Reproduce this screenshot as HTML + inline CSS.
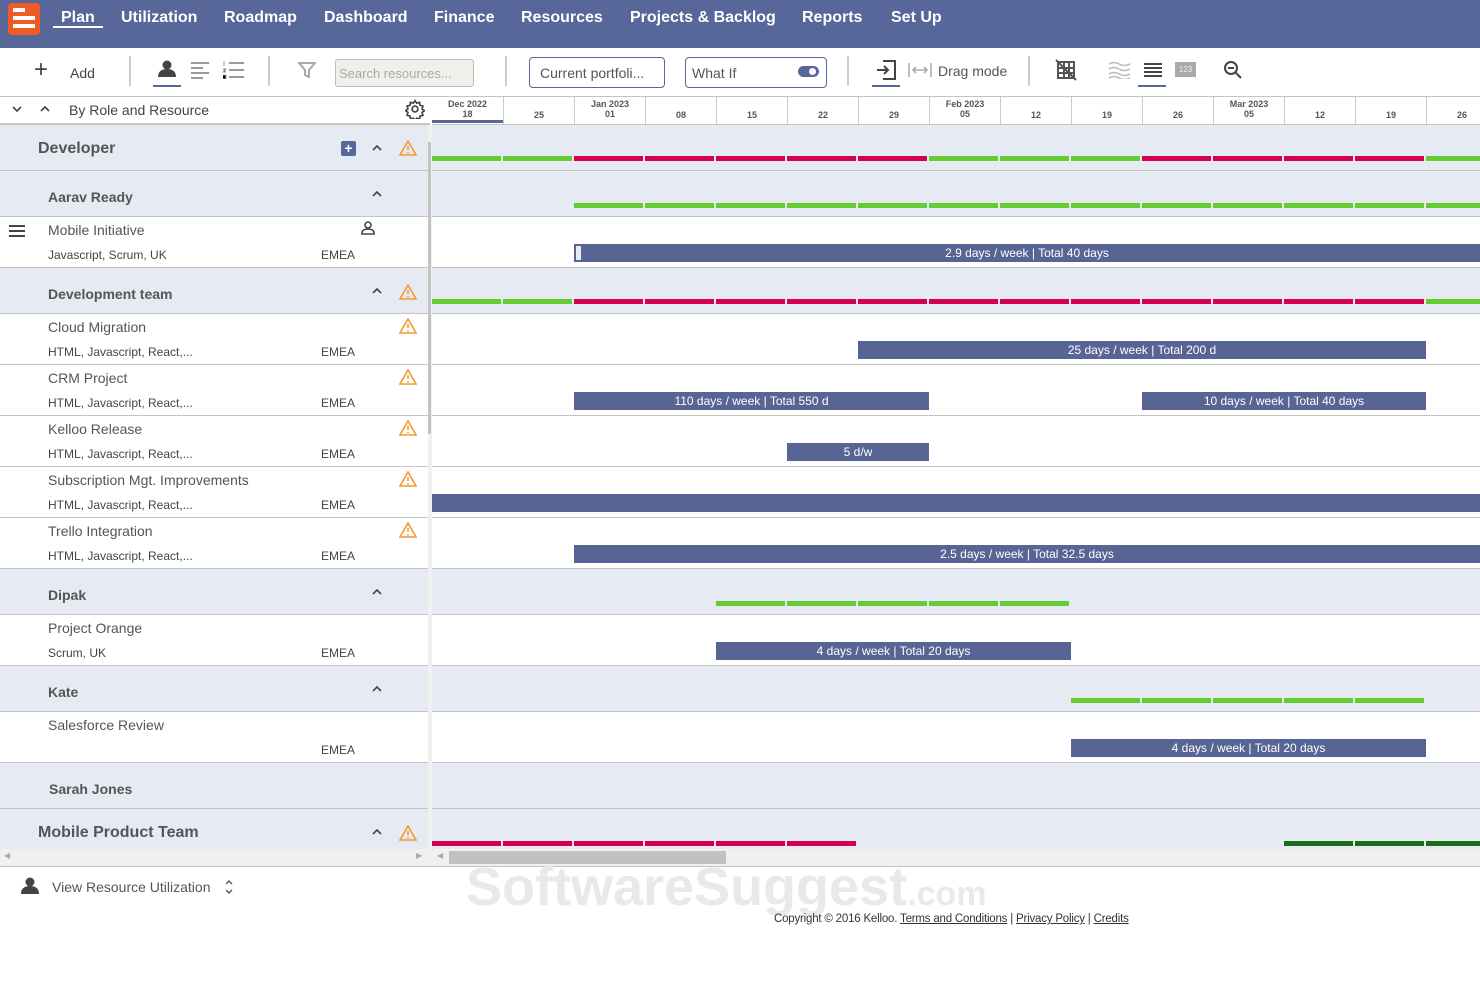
<!DOCTYPE html>
<html><head><meta charset="utf-8"><style>
*{box-sizing:border-box;margin:0;padding:0}
body{width:1480px;height:987px;position:relative;overflow:hidden;background:#fff;font-family:"Liberation Sans",Arial,sans-serif;color:#444}
.a{position:absolute}
.nav{left:0;top:0;width:1480px;height:48px;background:#58679a}
.nav span{position:absolute;top:9px;color:#fff;font-weight:bold;font-size:16px}
.row{position:absolute;left:0;width:428px;border-bottom:1px solid #c4c4c4}
.g{background:#e6eaf2}
.w{background:#fff}
.tr{position:absolute;left:432px;width:1048px;border-bottom:1px solid #c4c4c4}
.t1{position:absolute;left:48px;top:5px;font-size:14px;color:#555}
.t2{position:absolute;left:48px;top:31px;font-size:12px;color:#444}
.em{position:absolute;left:321px;top:31px;font-size:12px;color:#444}
.hb{position:absolute;left:48px;font-weight:bold;font-size:14px;color:#555}
.car{position:absolute;left:371px}
.warn{position:absolute;left:399px}
.bar{position:absolute;height:18px;background:#586594;color:#fff;font-size:12px;text-align:center;line-height:18px}
.wk{position:absolute;top:97px;width:71px;height:27px;border-left:1px solid #ccc;font-size:9px;font-weight:bold;color:#555;text-align:center}
.tb{position:absolute;top:57px;height:31px;border:1px solid #58679a;border-radius:4px;font-size:14px;color:#555;padding:7px 10px}
.sep{position:absolute;top:56px;width:2px;height:30px;background:#ccc}
</style></head><body>
<svg width="0" height="0" style="position:absolute"><defs>
<symbol id="wn" viewBox="0 0 18 16"><path d="M9 1L1 15h16z" fill="none" stroke="#f29a2e" stroke-width="1.6"/><path d="M9 6v4M9 12v1.5" stroke="#f29a2e" stroke-width="1.6"/></symbol>
<symbol id="up" viewBox="0 0 12 8"><path d="M2 6l4-4 4 4" fill="none" stroke="#444" stroke-width="1.6"/></symbol>
<symbol id="dn" viewBox="0 0 12 8"><path d="M2 2l4 4 4-4" fill="none" stroke="#444" stroke-width="1.6"/></symbol>
</defs></svg>
<div class="a nav">
 <div class="a" style="left:8px;top:3px;width:32px;height:32px;background:#f05a24;border-radius:4px"></div>
 <div class="a" style="left:13px;top:8px;width:12px;height:4px;background:#fff"></div>
 <div class="a" style="left:13px;top:16px;width:22px;height:4px;background:#fff"></div>
 <div class="a" style="left:13px;top:24px;width:22px;height:4px;background:#fff"></div>
 <span style="left:61px">Plan</span><div class="a" style="left:53px;top:26px;width:50px;height:2px;background:#fff"></div>
 <span style="left:121px">Utilization</span><span style="left:224px">Roadmap</span><span style="left:324px">Dashboard</span><span style="left:434px">Finance</span><span style="left:521px">Resources</span><span style="left:630px">Projects &amp; Backlog</span><span style="left:802px">Reports</span><span style="left:891px">Set Up</span>
</div>
<div class="a" style="left:34px;top:58px;font-size:24px;color:#444;line-height:24px">+</div>
<div class="a" style="left:70px;top:65px;font-size:14px;color:#444">Add</div>
<div class="sep" style="left:129px"></div>
<svg class="a" style="left:157px;top:60px" width="20" height="18"><circle cx="10" cy="5" r="4.5" fill="#444"/><path d="M1 17c0-6 4-8 9-8s9 2 9 8z" fill="#444"/></svg>
<div class="a" style="left:153px;top:85px;width:28px;height:2px;background:#58679a"></div>
<svg class="a" style="left:190px;top:61px" width="20" height="18" stroke="#999" stroke-width="2"><path d="M1 2h18M1 7h12M1 12h18M1 17h12"/></svg>
<svg class="a" style="left:222px;top:61px" width="22" height="18" stroke="#999" stroke-width="2"><path d="M7 2h15M7 9h15M7 16h15"/><path d="M2 0v5M1 8h3l-3 3h3M1 14h3v4H1" stroke-width="1"/></svg>
<div class="sep" style="left:268px"></div>
<svg class="a" style="left:298px;top:62px" width="18" height="16"><path d="M1 1h16l-6 7v7l-4-2v-5z" fill="none" stroke="#aaa" stroke-width="2"/></svg>
<div class="a" style="left:335px;top:59px;width:139px;height:28px;border:1px solid #bbb;border-radius:3px;background:#eef0ea;font-size:13px;color:#aaa;padding:6px 3px">Search resources...</div>
<div class="sep" style="left:505px"></div>
<div class="tb" style="left:529px;width:136px">Current portfoli...</div>
<div class="tb" style="left:685px;width:142px;padding-left:6px">What If</div>
<div class="a" style="left:798px;top:66px;width:21px;height:11px;background:#58679a;border-radius:6px"></div><div class="a" style="left:809px;top:68px;width:7px;height:7px;background:#fff;border-radius:50%"></div>
<div class="sep" style="left:847px"></div>
<svg class="a" style="left:875px;top:60px" width="22" height="20" fill="none" stroke="#444" stroke-width="2"><path d="M8 1h12v18H8M2 10h11M9 6l4 4-4 4"/></svg>
<div class="a" style="left:872px;top:85px;width:28px;height:2px;background:#58679a"></div>
<svg class="a" style="left:908px;top:62px" width="24" height="16" fill="none" stroke="#aaa" stroke-width="1.5"><path d="M1 1v14M23 1v14M5 8h14M8 5l-3 3 3 3M16 5l3 3-3 3"/></svg>
<div class="a" style="left:938px;top:63px;font-size:14px;color:#555">Drag mode</div>
<div class="sep" style="left:1028px"></div>
<svg class="a" style="left:1055px;top:59px" width="22" height="22" fill="none" stroke="#555" stroke-width="2"><path d="M3 3h16v16H3zM3 9h16M3 14h16M9 3v16M14 3v16M1 1l20 20"/></svg>
<svg class="a" style="left:1108px;top:61px" width="23" height="18" fill="none" stroke="#bbb" stroke-width="1.6"><path d="M1 3q5-3 10 0t11 0M1 8q5-3 10 0t11 0M1 13q5-3 10 0t11 0M1 17q5-3 10 0t11 0"/></svg>
<svg class="a" style="left:1144px;top:62px" width="18" height="16" stroke="#444" stroke-width="2"><path d="M0 2h18M0 6h18M0 10h18M0 14h18"/></svg>
<div class="a" style="left:1138px;top:85px;width:28px;height:2px;background:#58679a"></div>
<div class="a" style="left:1175px;top:62px;width:21px;height:15px;background:#aaa;color:#eee;font-size:8px;text-align:center;line-height:15px">123</div>
<svg class="a" style="left:1223px;top:60px" width="20" height="20" fill="none" stroke="#444" stroke-width="2"><circle cx="8" cy="8" r="6"/><path d="M12 12l6 6M5 8h6"/></svg>
<div class="a" style="left:0;top:96px;width:1480px;height:1px;background:#c4c4c4"></div>
<div class="a" style="left:0;top:97px;width:430px;height:28px;background:#fff;border-bottom:2px solid #c4c4c4"></div>
<svg class="a" style="left:11px;top:105px" width="12" height="8"><use href="#dn"/></svg>
<svg class="a" style="left:39px;top:105px" width="12" height="8"><use href="#up"/></svg>
<div class="a" style="left:69px;top:102px;font-size:14px;color:#444">By Role and Resource</div>
<svg class="a" style="left:405px;top:99px" width="20" height="20" viewBox="0 0 24 24" fill="none" stroke="#444" stroke-width="2"><circle cx="12" cy="12" r="3.5"/><path d="M12 2l2 3 3.5-1 .5 3.5 3.5 1-1 3.5 3 2-3 2 1 3.5-3.5 1-.5 3.5-3.5-1-2 3-2-3-3.5 1-.5-3.5-3.5-1 1-3.5-3-2 3-2-1-3.5 3.5-1 .5-3.5 3.5 1z"/></svg>
<div class="a" style="left:432px;top:124px;width:1048px;height:1px;background:#c4c4c4"></div>
<div class="wk" style="left:432px;border-left:none"><div style="margin-top:2px">Dec 2022</div>18</div>
<div class="a" style="left:432px;top:120px;width:71px;height:3px;background:#58679a"></div>
<div class="wk" style="left:503px"><div style="margin-top:13px">25</div></div>
<div class="wk" style="left:574px"><div style="margin-top:2px">Jan 2023</div>01</div>
<div class="wk" style="left:645px"><div style="margin-top:13px">08</div></div>
<div class="wk" style="left:716px"><div style="margin-top:13px">15</div></div>
<div class="wk" style="left:787px"><div style="margin-top:13px">22</div></div>
<div class="wk" style="left:858px"><div style="margin-top:13px">29</div></div>
<div class="wk" style="left:929px"><div style="margin-top:2px">Feb 2023</div>05</div>
<div class="wk" style="left:1000px"><div style="margin-top:13px">12</div></div>
<div class="wk" style="left:1071px"><div style="margin-top:13px">19</div></div>
<div class="wk" style="left:1142px"><div style="margin-top:13px">26</div></div>
<div class="wk" style="left:1213px"><div style="margin-top:2px">Mar 2023</div>05</div>
<div class="wk" style="left:1284px"><div style="margin-top:13px">12</div></div>
<div class="wk" style="left:1355px"><div style="margin-top:13px">19</div></div>
<div class="wk" style="left:1426px"><div style="margin-top:13px">26</div></div>

<div class="row g" style="top:125px;height:46px"><div class="a" style="left:38px;top:15px;font-size:16px;font-weight:bold;color:#555">Developer</div></div>
<div class="a" style="left:341px;top:141px;width:15px;height:15px;background:#58679a;border-radius:2px;color:#fff;font-size:14px;line-height:14px;text-align:center;font-weight:bold">+</div>
<div class="row g" style="top:171px;height:46px"><div class="hb" style="top:18px">Aarav Ready</div></div>
<div class="row w" style="top:217px;height:51px"><div class="t1">Mobile Initiative</div><div class="t2">Javascript, Scrum, UK</div><div class="em">EMEA</div>
 <svg class="a" style="left:9px;top:8px" width="16" height="12" stroke="#444" stroke-width="2"><path d="M0 1h16M0 6h16M0 11h16"/></svg>
 <svg class="a" style="left:361px;top:4px" width="14" height="14" fill="none" stroke="#444" stroke-width="1.6"><circle cx="7" cy="4" r="3"/><path d="M1 13v-1c0-3 3-4 6-4s6 1 6 4v1z"/></svg></div>
<div class="row g" style="top:268px;height:46px"><div class="hb" style="top:18px">Development team</div></div>
<div class="row w" style="top:314px;height:51px"><div class="t1">Cloud Migration</div><div class="t2">HTML, Javascript, React,...</div><div class="em">EMEA</div></div>
<div class="row w" style="top:365px;height:51px"><div class="t1">CRM Project</div><div class="t2">HTML, Javascript, React,...</div><div class="em">EMEA</div></div>
<div class="row w" style="top:416px;height:51px"><div class="t1">Kelloo Release</div><div class="t2">HTML, Javascript, React,...</div><div class="em">EMEA</div></div>
<div class="row w" style="top:467px;height:51px"><div class="t1">Subscription Mgt. Improvements</div><div class="t2">HTML, Javascript, React,...</div><div class="em">EMEA</div></div>
<div class="row w" style="top:518px;height:51px"><div class="t1">Trello Integration</div><div class="t2">HTML, Javascript, React,...</div><div class="em">EMEA</div></div>
<div class="row g" style="top:569px;height:46px"><div class="hb" style="top:18px">Dipak</div></div>
<div class="row w" style="top:615px;height:51px"><div class="t1">Project Orange</div><div class="t2">Scrum, UK</div><div class="em">EMEA</div></div>
<div class="row g" style="top:666px;height:46px"><div class="hb" style="top:18px">Kate</div></div>
<div class="row w" style="top:712px;height:51px"><div class="t1">Salesforce Review</div><div class="em">EMEA</div></div>
<div class="row g" style="top:763px;height:46px"><div class="hb" style="top:18px;left:49px">Sarah Jones</div></div>
<div class="row g" style="top:809px;height:40px;border:none"><div class="a" style="left:38px;top:15px;font-size:16px;font-weight:bold;color:#555">Mobile Product Team</div></div>
<svg class="car" style="top:144px" width="12" height="8"><use href="#up"/></svg>
<svg class="car" style="top:190px" width="12" height="8"><use href="#up"/></svg>
<svg class="car" style="top:287px" width="12" height="8"><use href="#up"/></svg>
<svg class="car" style="top:588px" width="12" height="8"><use href="#up"/></svg>
<svg class="car" style="top:685px" width="12" height="8"><use href="#up"/></svg>
<svg class="car" style="top:828px" width="12" height="8"><use href="#up"/></svg>
<svg class="a warn" style="top:140px" width="18" height="16"><use href="#wn"/></svg>
<svg class="a warn" style="top:284px" width="18" height="16"><use href="#wn"/></svg>
<svg class="a warn" style="top:318px" width="18" height="16"><use href="#wn"/></svg>
<svg class="a warn" style="top:369px" width="18" height="16"><use href="#wn"/></svg>
<svg class="a warn" style="top:420px" width="18" height="16"><use href="#wn"/></svg>
<svg class="a warn" style="top:471px" width="18" height="16"><use href="#wn"/></svg>
<svg class="a warn" style="top:522px" width="18" height="16"><use href="#wn"/></svg>
<svg class="a warn" style="top:825px" width="18" height="16"><use href="#wn"/></svg>
<div class="a" style="left:428px;top:125px;width:4px;height:742px;background:#f0f0f0"></div>
<div class="a" style="left:428px;top:142px;width:3px;height:292px;background:#c4c4c4"></div>
<div class="tr g" style="top:125px;height:46px"></div>
<div class="tr g" style="top:171px;height:46px"></div>
<div class="tr w" style="top:217px;height:51px"></div>
<div class="tr g" style="top:268px;height:46px"></div>
<div class="tr w" style="top:314px;height:51px"></div>
<div class="tr w" style="top:365px;height:51px"></div>
<div class="tr w" style="top:416px;height:51px"></div>
<div class="tr w" style="top:467px;height:51px"></div>
<div class="tr w" style="top:518px;height:51px"></div>
<div class="tr g" style="top:569px;height:46px"></div>
<div class="tr w" style="top:615px;height:51px"></div>
<div class="tr g" style="top:666px;height:46px"></div>
<div class="tr w" style="top:712px;height:51px"></div>
<div class="tr g" style="top:763px;height:46px"></div>
<div class="tr g" style="top:809px;height:40px;border:none"></div>
<svg class="a" style="left:432px;top:0" width="1048" height="860">
<g fill="#66cc33"><rect x="0" y="156" width="69" height="5"/><rect x="71" y="156" width="69" height="5"/><rect x="497" y="156" width="69" height="5"/><rect x="568" y="156" width="69" height="5"/><rect x="639" y="156" width="69" height="5"/><rect x="994" y="156" width="54" height="5"/></g>
<g fill="#d4004b"><rect x="142" y="156" width="69" height="5"/><rect x="213" y="156" width="69" height="5"/><rect x="284" y="156" width="69" height="5"/><rect x="355" y="156" width="69" height="5"/><rect x="426" y="156" width="69" height="5"/><rect x="710" y="156" width="69" height="5"/><rect x="781" y="156" width="69" height="5"/><rect x="852" y="156" width="69" height="5"/><rect x="923" y="156" width="69" height="5"/></g>
<g fill="#66cc33"><rect x="142" y="203" width="69" height="5"/><rect x="213" y="203" width="69" height="5"/><rect x="284" y="203" width="69" height="5"/><rect x="355" y="203" width="69" height="5"/><rect x="426" y="203" width="69" height="5"/><rect x="497" y="203" width="69" height="5"/><rect x="568" y="203" width="69" height="5"/><rect x="639" y="203" width="69" height="5"/><rect x="710" y="203" width="69" height="5"/><rect x="781" y="203" width="69" height="5"/><rect x="852" y="203" width="69" height="5"/><rect x="923" y="203" width="69" height="5"/><rect x="994" y="203" width="54" height="5"/></g>
<g fill="#66cc33"><rect x="0" y="299" width="69" height="5"/><rect x="71" y="299" width="69" height="5"/><rect x="994" y="299" width="54" height="5"/></g>
<g fill="#d4004b"><rect x="142" y="299" width="69" height="5"/><rect x="213" y="299" width="69" height="5"/><rect x="284" y="299" width="69" height="5"/><rect x="355" y="299" width="69" height="5"/><rect x="426" y="299" width="69" height="5"/><rect x="497" y="299" width="69" height="5"/><rect x="568" y="299" width="69" height="5"/><rect x="639" y="299" width="69" height="5"/><rect x="710" y="299" width="69" height="5"/><rect x="781" y="299" width="69" height="5"/><rect x="852" y="299" width="69" height="5"/><rect x="923" y="299" width="69" height="5"/></g>
<g fill="#66cc33"><rect x="284" y="601" width="69" height="5"/><rect x="355" y="601" width="69" height="5"/><rect x="426" y="601" width="69" height="5"/><rect x="497" y="601" width="69" height="5"/><rect x="568" y="601" width="69" height="5"/></g>
<g fill="#66cc33"><rect x="639" y="698" width="69" height="5"/><rect x="710" y="698" width="69" height="5"/><rect x="781" y="698" width="69" height="5"/><rect x="852" y="698" width="69" height="5"/><rect x="923" y="698" width="69" height="5"/></g>
<g fill="#d4004b"><rect x="0" y="841" width="69" height="5"/><rect x="71" y="841" width="69" height="5"/><rect x="142" y="841" width="69" height="5"/><rect x="213" y="841" width="69" height="5"/><rect x="284" y="841" width="69" height="5"/><rect x="355" y="841" width="69" height="5"/></g>
<g fill="#1a6e1a"><rect x="852" y="841" width="69" height="5"/><rect x="923" y="841" width="69" height="5"/><rect x="994" y="841" width="54" height="5"/></g>
</svg>
<div class="bar" style="left:574px;top:244px;width:906px">2.9 days / week | Total 40 days</div>
<div class="a" style="left:576px;top:246px;width:5px;height:14px;background:#e6eaf2"></div>
<div class="bar" style="left:858px;top:341px;width:568px">25 days / week | Total 200 d</div>
<div class="bar" style="left:574px;top:392px;width:355px">110 days / week | Total 550 d</div>
<div class="bar" style="left:1142px;top:392px;width:284px">10 days / week | Total 40 days</div>
<div class="bar" style="left:787px;top:443px;width:142px">5 d/w</div>
<div class="bar" style="left:432px;top:494px;width:1048px"></div>
<div class="bar" style="left:574px;top:545px;width:906px">2.5 days / week | Total 32.5 days</div>
<div class="bar" style="left:716px;top:642px;width:355px">4 days / week | Total 20 days</div>
<div class="bar" style="left:1071px;top:739px;width:355px">4 days / week | Total 20 days</div>
<div class="a" style="left:0;top:849px;width:428px;height:17px;background:#f0f0f0"></div>
<div class="a" style="left:432px;top:849px;width:1048px;height:17px;background:#f0f0f0"></div>
<div class="a" style="left:449px;top:851px;width:277px;height:13px;background:#c1c1c1"></div>
<div class="a" style="left:4px;top:851px;font-size:8px;color:#aaa">&#9664;</div>
<div class="a" style="left:416px;top:851px;font-size:8px;color:#aaa">&#9654;</div>
<div class="a" style="left:437px;top:851px;font-size:8px;color:#aaa">&#9664;</div>
<div class="a" style="left:0;top:866px;width:1480px;height:1px;background:#c4c4c4"></div>
<svg class="a" style="left:21px;top:877px" width="18" height="17"><circle cx="9" cy="5" r="4.5" fill="#444"/><path d="M0 17c0-6 4-8 9-8s9 2 9 8z" fill="#444"/></svg>
<div class="a" style="left:52px;top:879px;font-size:14px;color:#555">View Resource Utilization</div>
<svg class="a" style="left:224px;top:879px" width="10" height="16" fill="none" stroke="#555" stroke-width="1.4"><path d="M2 5l3-3 3 3M2 11l3 3 3-3"/></svg>
<div class="a" style="left:466px;top:856px;font-size:54px;font-weight:bold;color:#e9e9e9;white-space:nowrap">SoftwareSuggest<span style="font-size:34px">.com</span></div>
<div class="a" style="left:774px;top:913px;font-size:11.5px;color:#333;white-space:nowrap;letter-spacing:-0.2px">Copyright © 2016 Kelloo. <u>Terms and Conditions</u> | <u>Privacy Policy</u> | <u>Credits</u></div>
</body></html>
